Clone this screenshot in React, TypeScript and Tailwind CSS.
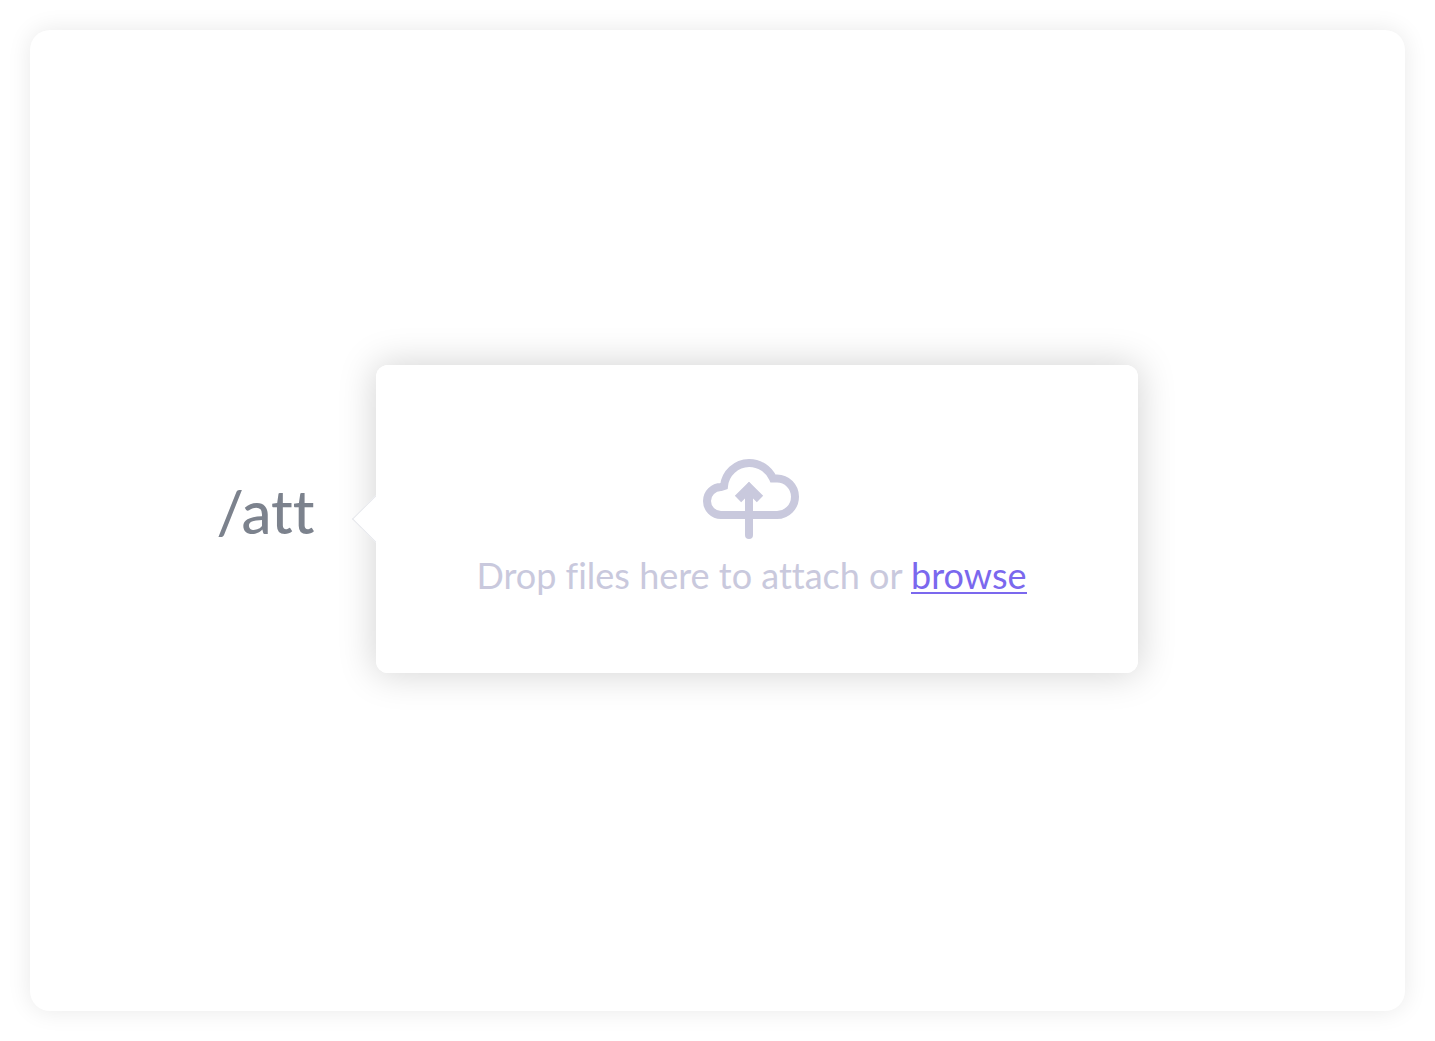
import React, { useRef } from "react";

const UploadIcon = () => (
  <svg
    className="h-20 w-24"
    viewBox="0 0 96 80"
    fill="none"
    stroke="currentColor"
    strokeWidth="8"
    aria-hidden="true"
  >
    <path d="M18 56A14 14 0 0 1 18 28L21 27A25.500 25.500 0 0 1 46 4A26 26 0 0 1 70 19.500L74 19.500A18 18.250 0 0 1 74 56Z" />
    <path d="M46 30V76" strokeLinecap="round" />
    <path d="M35 40L46 29L57 40" strokeWidth="9" />
    <path d="M46 23L36 36H56Z" fill="currentColor" stroke="none" />
  </svg>
);

const DropZone = () => {
  const fileInput = useRef<HTMLInputElement>(null);

  return (
    <div className="relative w-full max-w-[762px] rounded-xl bg-white shadow-[0_0_36px_2px_rgba(0,0,0,0.17)]">
      <div className="absolute top-1/2 -left-[17px] h-[34px] w-[34px] -translate-y-1/2 rotate-45 border-b border-l border-gray-200 bg-white" />
      <div className="relative flex flex-col items-center gap-[14px] rounded-xl bg-white pt-[94px] pr-3 pb-[76px] text-[#c9c9dd]">
        <UploadIcon />
        <p className="text-[36px] leading-[44px] whitespace-nowrap">
          Drop files here to attach or{" "}
          <button
            type="button"
            className="cursor-pointer border-b-2 border-[#7b68ee] leading-[34px] text-[#7b68ee]"
            onClick={() => fileInput.current?.click()}
          >
            browse
          </button>
        </p>
        <input
          ref={fileInput}
          type="file"
          multiple
          className="hidden"
          aria-label="Attach files"
        />
      </div>
    </div>
  );
};

const App = () => {
  return (
    <main className="flex min-h-screen bg-white p-[30px] font-['Lato',sans-serif] [font-variant-ligatures:none]">
      <section className="flex flex-1 items-center justify-center gap-[62px] rounded-[20px] bg-white pr-20 pb-1 shadow-[0_0_24px_rgba(0,0,0,0.09)]">
        <p className="pb-4 text-[60px] leading-[64px] font-medium text-[#7c828d]">
          /att
        </p>
        <DropZone />
      </section>
    </main>
  );
};

export default App;
